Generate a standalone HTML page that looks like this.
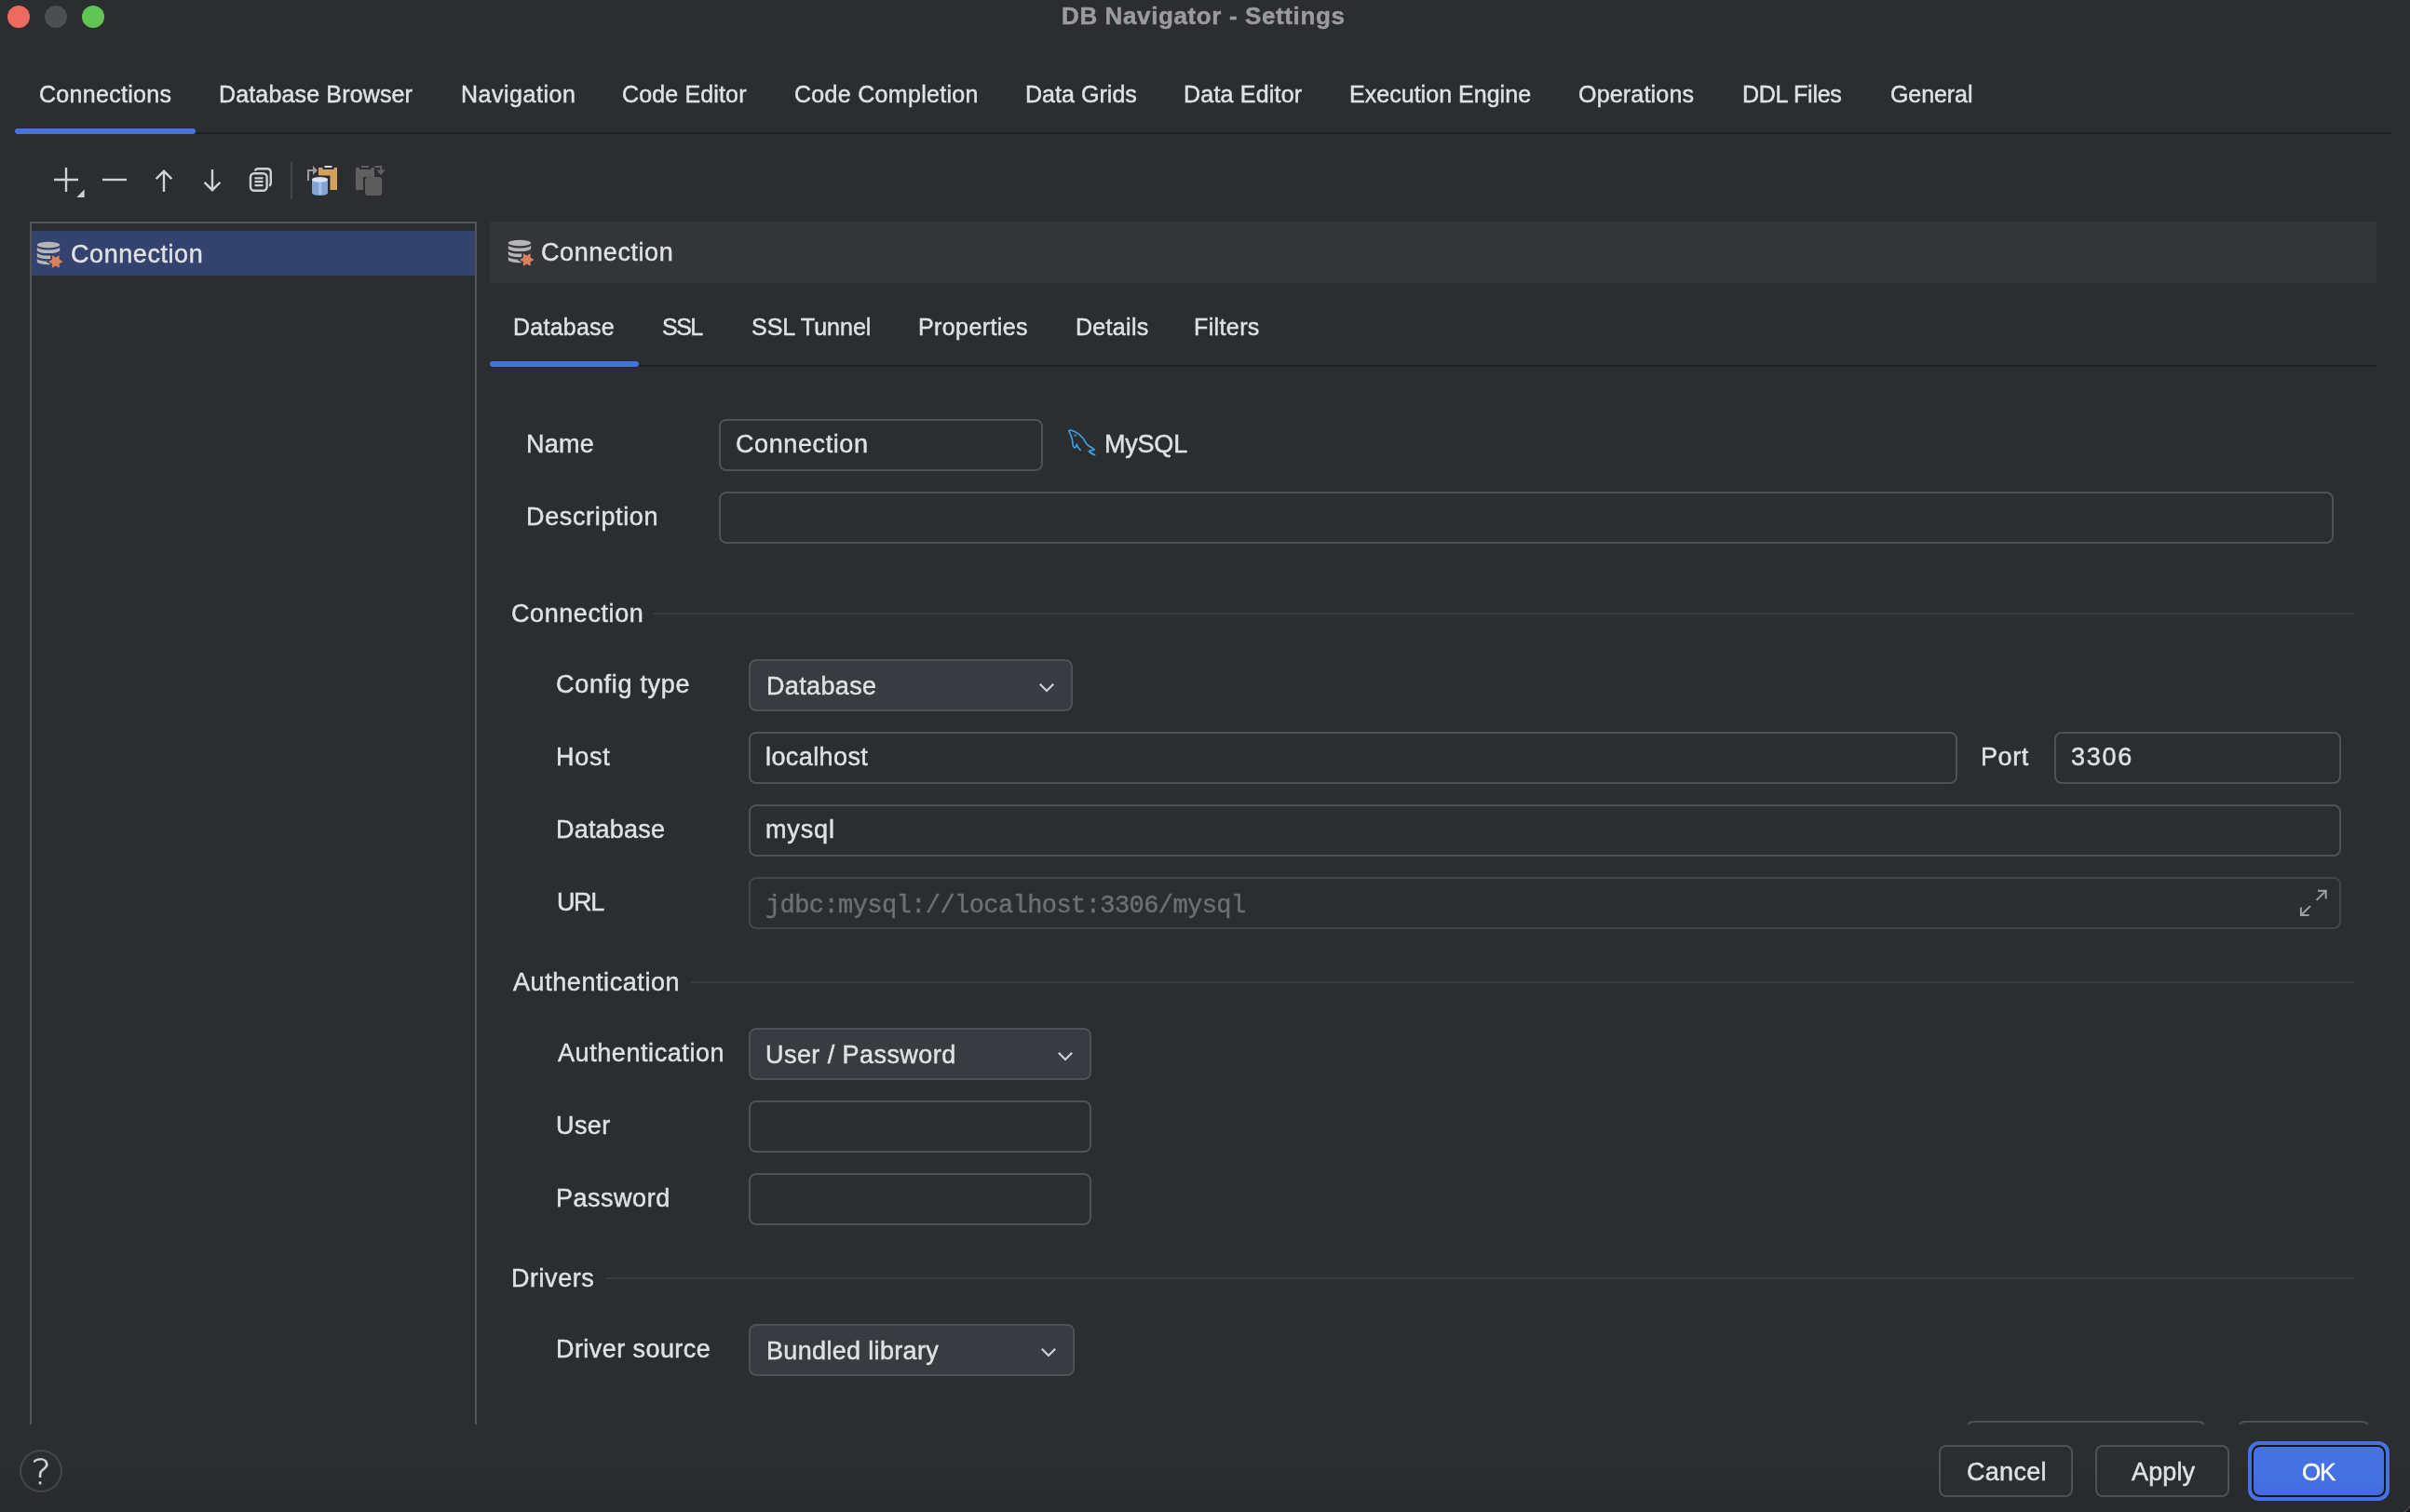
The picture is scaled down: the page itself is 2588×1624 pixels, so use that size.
<!DOCTYPE html>
<html lang="en">
<head>
<meta charset="utf-8">
<title>DB Navigator - Settings</title>
<style>
html,body{margin:0;padding:0;}
body{width:2588px;height:1624px;overflow:hidden;position:relative;background:#2B2D30;
  font-family:"Liberation Sans",sans-serif;color:#DFE1E5;}
.abs,.t,.box,.combo,.btn,svg.i{position:absolute;}
.t{will-change:transform;-webkit-text-stroke:0.45px currentColor;white-space:nowrap;margin:0;padding:0;font-weight:400;display:block;}
.shade{left:0;top:1566px;width:2588px;height:58px;background:linear-gradient(#2B2D30,#28292C);}
.dot{width:24px;height:24px;border-radius:50%;top:6px;}
.underline{height:6px;border-radius:3px;background:#4571E2;}
.divider{height:2px;background:#1E1F22;}
.box{box-sizing:border-box;border:2px solid #4E5157;border-radius:8px;height:56px;background:#2B2D30;}
.box.dis{border-color:#43454A;}
.combo{box-sizing:border-box;border:2px solid #4E5157;border-radius:8px;height:56px;background:#393B40;}
.btn{box-sizing:border-box;border:2px solid #4E5157;border-radius:8px;height:56px;width:144px;top:1552px;background:#2B2D30;}
.hline{height:2px;background:#393B40;}
.listpane{left:32px;top:238px;width:480px;height:1292px;box-sizing:border-box;border:2px solid #525459;border-bottom:none;}
.row{left:34px;top:248px;width:476px;height:48px;background:#34436E;}
.band{left:526px;top:238px;width:2026px;height:66px;background:#343539;}
.clip{top:1526px;height:4px;overflow:hidden;}
.clip div{box-sizing:border-box;border:2px solid #4E5157;border-radius:8px;height:56px;width:100%;}
</style>
</head>
<body>
<div class="abs shade"></div>

<!-- title bar -->
<header>
<div class="abs dot" style="left:8px;background:#EC6A5E"></div>
<div class="abs dot" style="left:48px;background:#4D4E51"></div>
<div class="abs dot" style="left:88px;background:#61C554"></div>
<span class="t" style="left:1139.88px;top:1.00px;font-size:26px;line-height:32px;letter-spacing:0.613px;color:#9A9B9F;font-weight:700;">DB Navigator - Settings</span>
</header>

<!-- main tabs -->
<nav>
<div class="abs divider" style="left:16px;top:142px;width:2552px"></div>
<div class="abs underline" style="left:16px;top:138px;width:194px"></div>
<span class="t" style="left:41.64px;top:85.50px;font-size:25px;line-height:31px;letter-spacing:0.305px;color:#DFE1E5;">Connections</span>
<span class="t" style="left:234.62px;top:85.50px;font-size:25px;line-height:31px;letter-spacing:0.151px;color:#DFE1E5;">Database Browser</span>
<span class="t" style="left:494.62px;top:85.50px;font-size:25px;line-height:31px;letter-spacing:0.520px;color:#DFE1E5;">Navigation</span>
<span class="t" style="left:667.64px;top:85.50px;font-size:25px;line-height:31px;letter-spacing:0.148px;color:#DFE1E5;">Code Editor</span>
<span class="t" style="left:852.84px;top:85.50px;font-size:25px;line-height:31px;letter-spacing:0.309px;color:#DFE1E5;">Code Completion</span>
<span class="t" style="left:1100.62px;top:85.50px;font-size:25px;line-height:31px;letter-spacing:0.041px;color:#DFE1E5;">Data Grids</span>
<span class="t" style="left:1271.02px;top:85.50px;font-size:25px;line-height:31px;letter-spacing:0.210px;color:#DFE1E5;">Data Editor</span>
<span class="t" style="left:1448.82px;top:85.50px;font-size:25px;line-height:31px;letter-spacing:0.030px;color:#DFE1E5;">Execution Engine</span>
<span class="t" style="left:1695.49px;top:85.50px;font-size:25px;line-height:31px;letter-spacing:0.198px;color:#DFE1E5;">Operations</span>
<span class="t" style="left:1871.42px;top:85.50px;font-size:25px;line-height:31px;letter-spacing:-0.243px;color:#DFE1E5;">DDL Files</span>
<span class="t" style="left:2030.05px;top:85.50px;font-size:25px;line-height:31px;letter-spacing:-0.081px;color:#DFE1E5;">General</span>
</nav>

<!-- toolbar -->
<svg class="i" style="left:50px;top:170px" width="400" height="50" viewBox="50 170 400 50" fill="none" stroke="#CED0D6" stroke-width="2.4">
  <path d="M58 193H84M71 180V206"/>
  <path d="M90.6 203.6V212H82.2Z" fill="#CED0D6" stroke="none"/>
  <path d="M110 193H136"/>
  <path d="M176 206V183.6M167.6 192.2L176 183.8L184.4 192.2"/>
  <path d="M228 182V204.4M219.6 195.8L228 204.2L236.4 195.8"/>
  <rect x="269" y="186.2" width="17.6" height="18.6" rx="4"/>
  <path d="M273.5 191.3H282.5M273.5 195.2H282.5M273.5 199.1H282.5" stroke-width="2.2"/>
  <path d="M274 183.5Q274.5 181.3 277.5 181.3H286.8Q290.8 181.3 290.8 185.3V196Q290.8 199 289 199.6"/>
  <path d="M313 174V214" stroke="#43454A" stroke-width="2"/>
  <!-- import icon -->
  <g stroke="none" transform="translate(330 178)">
    <path d="M0 16V4H6V0L11 5L6 10V6H2V16Z" fill="#9B9B9B"/>
    <path d="M12 2H32V26H24.5V10.5H12Z" fill="#D2A25C"/>
    <rect x="16.5" y="0" width="12" height="4" fill="#2B2D30"/>
    <rect x="18.5" y="0" width="8" height="2" fill="#D8D8D8"/>
    <path d="M3.5 14Q3.5 10.8 13.5 10.8T23.5 14V29Q23.5 33 13.5 33T3.5 29Z" fill="#2B2D30"/>
    <path d="M5 15Q5 12.3 13.5 12.3T22 15V29Q22 32 13.5 32T5 29Z" fill="#7FA4D4"/>
    <ellipse cx="13.5" cy="15" rx="8.5" ry="2.7" fill="#DCE3EE"/>
    <rect x="12" y="18" width="3.5" height="13" fill="#B5C9E6" opacity=".7"/>
  </g>
  <!-- export icon (disabled) -->
  <g stroke="none" transform="translate(382 178)" fill="#606060">
    <path d="M0 2H20V12H8V26H0Z"/>
    <rect x="4" y="0" width="12.5" height="4" fill="#2B2D30"/>
    <rect x="6" y="0" width="8" height="2"/>
    <rect x="10" y="12" width="18.2" height="20" rx="3.5" fill="#5C5C5C"/>
    <path d="M20.3 0H28.2V4.5H32L27.2 10L22 4.5H26.1V2H20.3Z"/>
  </g>
</svg>

<!-- connection list -->
<aside>
<div class="abs listpane"></div>
<div class="abs row"></div>
<svg class="i" style="left:38px;top:258px;color:#34436E" width="32" height="32" viewBox="0 0 32 32"><use href="#dbicon"/></svg>
<span class="t" style="left:75.98px;top:256.00px;font-size:27px;line-height:34px;letter-spacing:0.565px;color:#DFE1E5;">Connection</span>
</aside>

<!-- connection header + sub tabs -->
<section>
<div class="abs band"></div>
<svg class="i" style="left:544px;top:256px;color:#343539" width="32" height="32" viewBox="0 0 32 32">
  <defs>
    <g id="dbicon">
      <ellipse cx="14" cy="5" rx="12.2" ry="3.3" fill="#B4B6B8"/>
      <path d="M1.8 7.2A12.2 3.3 0 0 0 26.2 7.2V10.8A12.2 3.3 0 0 1 1.8 10.8Z" fill="#B4B6B8"/>
      <path d="M1.8 13.3A12.2 3.3 0 0 0 26.2 13.3V16.9A12.2 3.3 0 0 1 1.8 16.9Z" fill="#B4B6B8"/>
      <path d="M1.8 19.4A12.2 3.3 0 0 0 26.2 19.4V23A12.2 3.3 0 0 1 1.8 23Z" fill="#B4B6B8"/>
      <path d="M16.3 14.3H27V30H16.3Z" fill="currentColor"/>
      <path d="M29.6 23L25.7 25.25L25.7 29.75L21.8 27.5L17.9 29.75L17.9 25.25L14 23L17.9 20.75L17.9 16.25L21.8 18.5L25.7 16.25L25.7 20.75Z" fill="#D9805F" stroke="currentColor" stroke-width="2.6" paint-order="stroke"/>
    </g>
  </defs>
  <use href="#dbicon"/>
</svg>
<span class="t" style="left:581.38px;top:254.00px;font-size:27px;line-height:34px;letter-spacing:0.569px;color:#DFE1E5;">Connection</span>
<div class="abs divider" style="left:526px;top:392px;width:2026px"></div>
<div class="abs underline" style="left:526px;top:388px;width:160px"></div>
<span class="t" style="left:551.02px;top:335.50px;font-size:25px;line-height:31px;letter-spacing:0.248px;color:#DFE1E5;">Database</span>
<span class="t" style="left:711.23px;top:335.50px;font-size:25px;line-height:31px;letter-spacing:-1.519px;color:#DFE1E5;">SSL</span>
<span class="t" style="left:807.43px;top:335.50px;font-size:25px;line-height:31px;letter-spacing:0.003px;color:#DFE1E5;">SSL Tunnel</span>
<span class="t" style="left:986.22px;top:335.50px;font-size:25px;line-height:31px;letter-spacing:0.403px;color:#DFE1E5;">Properties</span>
<span class="t" style="left:1154.82px;top:335.50px;font-size:25px;line-height:31px;letter-spacing:0.320px;color:#DFE1E5;">Details</span>
<span class="t" style="left:1282.22px;top:335.50px;font-size:25px;line-height:31px;letter-spacing:0.381px;color:#DFE1E5;">Filters</span>
</section>

<!-- form -->
<main>
<div class="box" style="left:772px;top:450px;width:348px"></div>
<div class="box" style="left:772px;top:528px;width:1734px"></div>
<svg class="i" style="left:1144px;top:458px" width="36" height="36" viewBox="0 0 36 36" fill="none" stroke="#3D9FE2" stroke-width="1.7" stroke-linejoin="round" stroke-linecap="round">
  <path d="M4 4.7Q4.6 3.6 6.5 4.3Q10.5 5.3 14.7 8.4Q19 11.8 21.5 16.7Q23 20.2 26.2 21.6Q30.3 23.2 31 25.4L27.2 25.6L25.8 26.9L31.6 30.7Q28 30 25.3 26.8"/>
  <path d="M4 4.7Q4.6 7 5.8 9.2Q7.8 13.5 7.9 18Q7.8 21.5 9.6 22.8Q11.3 22.6 11.6 21.6L12.2 19.4Q13 22.2 16.2 25.5"/>
  <circle cx="10.7" cy="9.5" r=".35" fill="#3D9FE2"/>
</svg>

<div class="abs hline" style="left:702px;top:658px;width:1826px"></div>
<div class="combo" style="left:804px;top:708px;width:348px"></div>
<div class="box" style="left:804px;top:786px;width:1298px"></div>
<div class="box" style="left:2206px;top:786px;width:308px"></div>
<div class="box" style="left:804px;top:864px;width:1710px"></div>
<div class="box dis" style="left:804px;top:942px;width:1710px"></div>

<div class="abs hline" style="left:742px;top:1054px;width:1786px"></div>
<div class="combo" style="left:804px;top:1104px;width:368px"></div>
<div class="box" style="left:804px;top:1182px;width:368px"></div>
<div class="box" style="left:804px;top:1260px;width:368px"></div>

<div class="abs hline" style="left:650px;top:1372px;width:1878px"></div>
<div class="combo" style="left:804px;top:1422px;width:350px"></div>

<svg class="i" style="left:1100px;top:700px" width="80" height="800" viewBox="1100 700 80 800" fill="none" stroke="#CED0D6" stroke-width="2.2">
  <path d="M1116.8 734.8L1124 742L1131.2 734.8"/>
  <path d="M1136.8 1130.8L1144 1138L1151.2 1130.8"/>
  <path d="M1118.8 1448.8L1126 1456L1133.2 1448.8"/>
</svg>
<svg class="i" style="left:2464px;top:950px" width="40" height="40" viewBox="2464 950 40 40" fill="none" stroke="#9DA0A8" stroke-width="2">
  <path d="M2487.6 966.9L2497.6 956.9M2489 956.8H2497.7V965.5"/>
  <path d="M2480.9 973.1L2471 983M2470.9 974.4V983.1H2479.6"/>
</svg>
<span class="t" style="left:564.74px;top:460.00px;font-size:27px;line-height:34px;letter-spacing:0.237px;color:#DFE1E5;">Name</span>
<span class="t" style="left:789.98px;top:460.00px;font-size:27px;line-height:34px;letter-spacing:0.601px;color:#DFE1E5;">Connection</span>
<span class="t" style="left:1185.74px;top:460.00px;font-size:27px;line-height:34px;letter-spacing:-0.216px;color:#DFE1E5;">MySQL</span>
<span class="t" style="left:565.34px;top:538.00px;font-size:27px;line-height:34px;letter-spacing:0.649px;color:#DFE1E5;">Description</span>
<span class="t" style="left:549.38px;top:642.00px;font-size:27px;line-height:34px;letter-spacing:0.580px;color:#DFE1E5;">Connection</span>
<span class="t" style="left:597.38px;top:718.00px;font-size:27px;line-height:34px;letter-spacing:0.693px;color:#DFE1E5;">Config type</span>
<span class="t" style="left:822.74px;top:720.00px;font-size:27px;line-height:34px;letter-spacing:0.362px;color:#DFE1E5;">Database</span>
<span class="t" style="left:596.54px;top:796.00px;font-size:27px;line-height:34px;letter-spacing:0.755px;color:#DFE1E5;">Host</span>
<span class="t" style="left:822.06px;top:796.00px;font-size:27px;line-height:34px;letter-spacing:0.413px;color:#DFE1E5;">localhost</span>
<span class="t" style="left:2127.34px;top:796.00px;font-size:27px;line-height:34px;letter-spacing:0.589px;color:#DFE1E5;">Port</span>
<span class="t" style="left:2223.88px;top:796.00px;font-size:27px;line-height:34px;letter-spacing:1.739px;color:#DFE1E5;">3306</span>
<span class="t" style="left:597.34px;top:874.00px;font-size:27px;line-height:34px;letter-spacing:0.188px;color:#DFE1E5;">Database</span>
<span class="t" style="left:822.02px;top:874.00px;font-size:27px;line-height:34px;letter-spacing:0.876px;color:#DFE1E5;">mysql</span>
<span class="t" style="left:597.60px;top:952.00px;font-size:27px;line-height:34px;letter-spacing:-1.414px;color:#DFE1E5;">URL</span>
<span class="t" style="left:822.20px;top:956.00px;font-size:27px;line-height:34px;letter-spacing:-0.578px;color:#6C6F75;font-family:'Liberation Mono',monospace;">jdbc:mysql://localhost:3306/mysql</span>
<span class="t" style="left:550.53px;top:1038.00px;font-size:27px;line-height:34px;letter-spacing:0.572px;color:#DFE1E5;">Authentication</span>
<span class="t" style="left:598.53px;top:1114.00px;font-size:27px;line-height:34px;letter-spacing:0.572px;color:#DFE1E5;">Authentication</span>
<span class="t" style="left:822.40px;top:1116.00px;font-size:27px;line-height:34px;letter-spacing:0.439px;color:#DFE1E5;">User / Password</span>
<span class="t" style="left:596.60px;top:1192.00px;font-size:27px;line-height:34px;letter-spacing:0.437px;color:#DFE1E5;">User</span>
<span class="t" style="left:596.54px;top:1270.00px;font-size:27px;line-height:34px;letter-spacing:0.516px;color:#DFE1E5;">Password</span>
<span class="t" style="left:548.54px;top:1356.00px;font-size:27px;line-height:34px;letter-spacing:0.541px;color:#DFE1E5;">Drivers</span>
<span class="t" style="left:596.54px;top:1432.00px;font-size:27px;line-height:34px;letter-spacing:0.434px;color:#DFE1E5;">Driver source</span>
<span class="t" style="left:823.34px;top:1434.00px;font-size:27px;line-height:34px;letter-spacing:0.334px;color:#DFE1E5;">Bundled library</span>
<div class="abs clip" style="left:2111px;width:258px"><div></div></div>
<div class="abs clip" style="left:2403px;width:142px"><div></div></div>
</main>

<!-- footer -->
<footer>
<div class="abs" style="left:21px;top:1557px;width:46px;height:46px;box-sizing:border-box;border:2px solid #44464B;border-radius:50%"></div>
<div class="btn" style="left:2082px"></div>
<div class="btn" style="left:2250px"></div>
<div class="abs" style="left:2414px;top:1548px;width:152px;height:64px;border-radius:12px;background:#4571E2"></div>
<div class="abs" style="left:2418px;top:1552px;width:144px;height:56px;border-radius:8.5px;background:#17181A"></div>
<div class="abs" style="left:2420px;top:1554px;width:140px;height:52px;border-radius:7px;background:linear-gradient(#4672E5,#4571E2 60%,#426CDD)"></div>
<span class="t" style="left:2111.58px;top:1564.00px;font-size:27px;line-height:34px;letter-spacing:0.291px;color:#DFE1E5;">Cancel</span>
<span class="t" style="left:2288.53px;top:1564.00px;font-size:27px;line-height:34px;letter-spacing:0.138px;color:#DFE1E5;">Apply</span>
<span class="t" style="left:2472.27px;top:1565.00px;font-size:26px;line-height:32px;letter-spacing:-1.265px;color:#FFFFFF;">OK</span>
<span class="t" id="help" style="left:33.2px;top:1558.0px;font-family:'DejaVu Sans',sans-serif;font-weight:200;font-size:38.0px;line-height:46px;color:#D4D6DB;-webkit-text-stroke-width:0.4px;transform:scaleX(1.1);transform-origin:0 0">?</span>
<div class="abs" style="left:2580px;top:1616px;width:8px;height:8px;background:radial-gradient(circle at -12px -12px,rgba(0,0,0,0) 23.5px,#55575B 24.4px,#101012 25.6px)"></div>
</footer>
</body>
</html>
